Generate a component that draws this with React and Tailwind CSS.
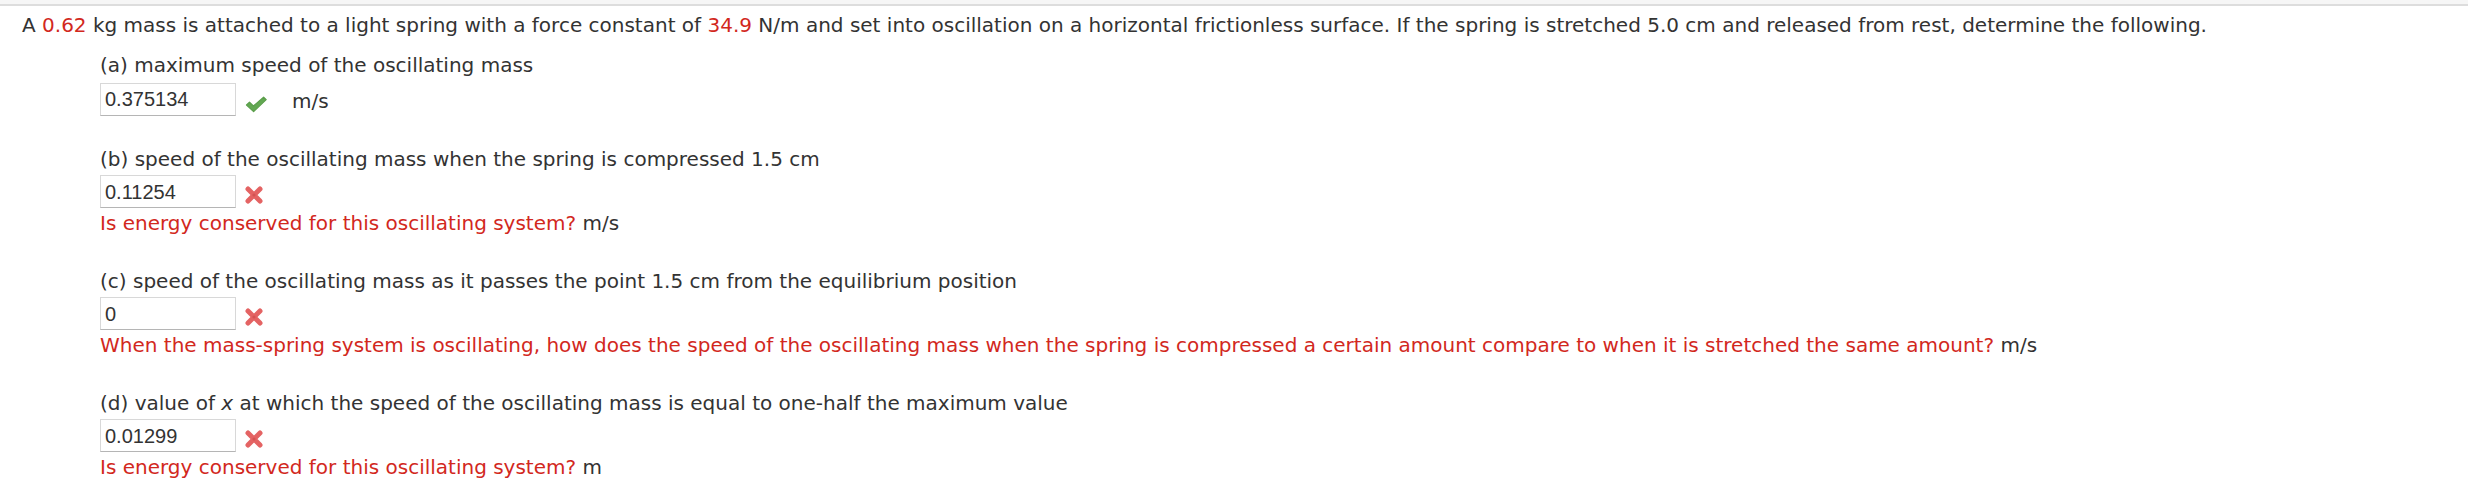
import React from "react";

const RED = "text-[#d2281d]";

function Check() {
  return (
    <svg width="23" height="17" viewBox="0 0 23 17" className="shrink-0">
      <path d="M1.5 9 L4.5 6.2 L8.4 10 L18.6 1.2 L21.2 3.6 L8.6 15.6 Z" fill="#62a852" stroke="#5a9e4a" strokeWidth="1.2" strokeLinejoin="round" />
    </svg>
  );
}

function Cross() {
  return (
    <svg width="20" height="20" viewBox="0 0 20 20" className="shrink-0">
      <path d="M4 4 L16 16 M16 4 L4 16" fill="none" stroke="#e46363" strokeWidth="5" strokeLinecap="round" />
      <circle cx="10" cy="10" r="1.6" fill="#d45252" />
    </svg>
  );
}

function Box({ value }) {
  return (
    <div className="w-[136px] h-[33px] border border-[#d8d8d8] border-b-[#b5b5b5] bg-white flex items-center px-[4px] shrink-0">
      <span className="text-[20px] text-[#333] leading-none" style={{ fontFamily: '"Liberation Sans", Arial, sans-serif' }}>{value}</span>
    </div>
  );
}

function CrossRow({ value }) {
  return (
    <div className="flex items-center">
      <Box value={value} />
      <div className="ml-[8px] mt-[6px]"><Cross /></div>
    </div>
  );
}

export default function App() {
  return (
    <div className="w-[2468px] h-[490px] bg-white text-[#333] overflow-hidden" style={{ fontFamily: '"DejaVu Sans", Verdana, sans-serif' }}>
      <div className="h-[6px] bg-[#f6f6f6] border-b-2 border-[#dddddd]" />
      <div className="pl-[22px] pt-[4px] text-[20px] leading-[31px]">
        <p>A <span className={RED}>0.62</span> kg mass is attached to a light spring with a force constant of <span className={RED}>34.9</span> N/m and set into oscillation on a horizontal frictionless surface. If the spring is stretched 5.0 cm and released from rest, determine the following.</p>
        <div className="pl-[78px] pt-[9px] flex flex-col gap-[27px]">
          <div>
            <div>(a) maximum speed of the oscillating mass</div>
            <div className="flex items-center">
              <Box value="0.375134" />
              <div className="ml-[9px] mt-[11px]"><Check /></div>
              <span className="ml-[24px] mt-[5px]">m/s</span>
            </div>
          </div>
          <div>
            <div>(b) speed of the oscillating mass when the spring is compressed 1.5 cm</div>
            <CrossRow value="0.11254" />
            <div><span className={RED}>Is energy conserved for this oscillating system?</span> m/s</div>
          </div>
          <div>
            <div>(c) speed of the oscillating mass as it passes the point 1.5 cm from the equilibrium position</div>
            <CrossRow value="0" />
            <div><span className={RED}>When the mass-spring system is oscillating, how does the speed of the oscillating mass when the spring is compressed a certain amount compare to when it is stretched the same amount?</span> m/s</div>
          </div>
          <div>
            <div>(d) value of <i>x</i> at which the speed of the oscillating mass is equal to one-half the maximum value</div>
            <CrossRow value="0.01299" />
            <div><span className={RED}>Is energy conserved for this oscillating system?</span> m</div>
          </div>
        </div>
      </div>
    </div>
  );
}
